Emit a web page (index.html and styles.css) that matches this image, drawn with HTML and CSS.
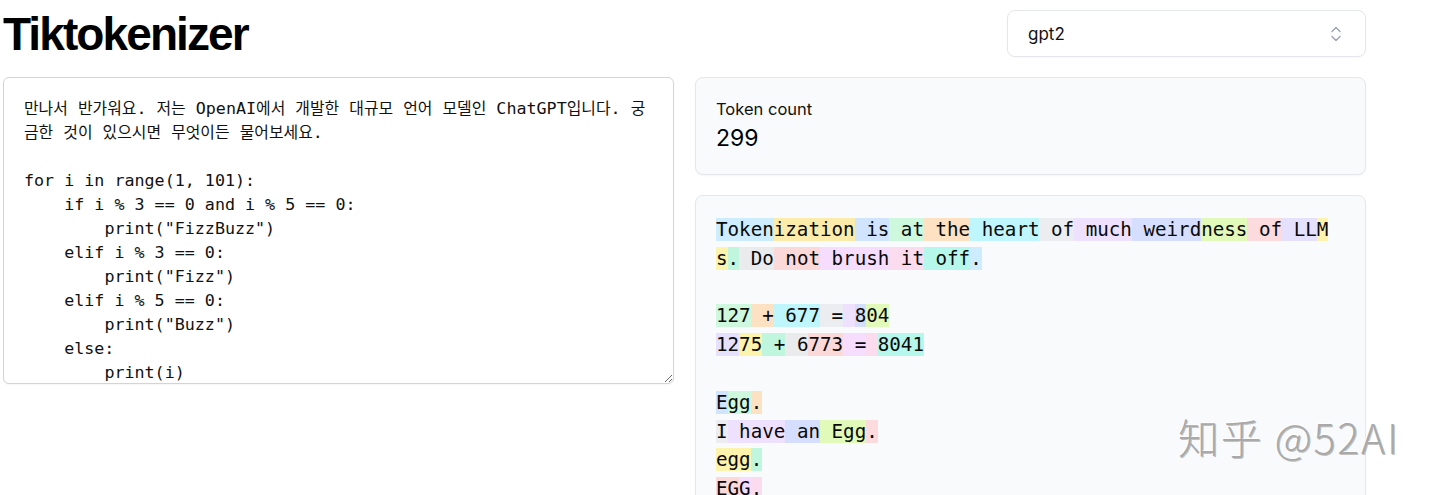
FILE: index.html
```html
<!DOCTYPE html>
<html lang="en">
<head>
<meta charset="utf-8">
<title>Tiktokenizer</title>
<link rel="stylesheet" href="styles.css">
</head>
<body>
<main class="page">
  <header class="top">
    <h1 class="title">Tiktokenizer</h1>
    <div class="select">
      <span class="select-value">gpt2</span>
      <svg class="chev" width="14" height="18" viewBox="0 0 14 18" fill="none" stroke="#9ca3af" stroke-width="1.4" stroke-linecap="round" stroke-linejoin="round"><polyline points="3,6.5 7,2.5 11,6.5"/><polyline points="3,11.5 7,15.5 11,11.5"/></svg>
    </div>
  </header>
  <section class="grid">
    <div class="editor"><div class="editor-text"><span class="ko">만나서</span> <span class="ko">반가워요</span>. <span class="ko">저는</span> OpenAI<span class="ko">에서</span> <span class="ko">개발한</span> <span class="ko">대규모</span> <span class="ko">언어</span> <span class="ko">모델인</span> ChatGPT<span class="ko">입니다</span>. <span class="ko">궁</span>
<span class="ko">금한</span> <span class="ko">것이</span> <span class="ko">있으시면</span> <span class="ko">무엇이든</span> <span class="ko">물어보세요</span>.

for i in range(1, 101):
    if i % 3 == 0 and i % 5 == 0:
        print("FizzBuzz")
    elif i % 3 == 0:
        print("Fizz")
    elif i % 5 == 0:
        print("Buzz")
    else:
        print(i)

Tokenization is at the heart of much weirdness of LLMs. Do not brush it off.</div></div>
    <div class="side">
      <div class="card count">
        <div class="count-label">Token count</div>
        <div class="count-num">299</div>
      </div>
      <div class="card tokens"><div class="token-text"><span class="t sky">Token</span><span class="t amber">ization</span><span class="t blue"> is</span><span class="t green"> at</span><span class="t orange"> the</span><span class="t cyan"> heart</span><span class="t gray"> of</span><span class="t purple"> much</span><span class="t indigo"> weird</span><span class="t lime">ness</span><span class="t rose"> of</span><span class="t violet"> LL</span><span class="t yellow">Ms</span><span class="t emerald">.</span><span class="t zinc"> Do</span><span class="t red"> not</span><span class="t fuchsia"> brush</span><span class="t pink"> it</span><span class="t teal"> off</span><span class="t sky">.</span>

<span class="t green">127</span><span class="t orange"> +</span><span class="t cyan"> 677</span><span class="t gray"> =</span><span class="t purple"> </span><span class="t indigo">8</span><span class="t lime">04</span>
<span class="t violet">12</span><span class="t yellow">75</span><span class="t emerald"> +</span><span class="t zinc"> 6</span><span class="t red">773</span><span class="t fuchsia"> =</span><span class="t pink"> </span><span class="t teal">8041</span>

<span class="t blue">E</span><span class="t green">gg</span><span class="t orange">.</span>
<span class="t gray">I</span><span class="t purple"> have</span><span class="t indigo"> an</span><span class="t lime"> Egg</span><span class="t rose">.</span>
<span class="t yellow">egg</span><span class="t emerald">.</span>
<span class="t red">EG</span><span class="t fuchsia">G</span><span class="t pink">.</span>

<span class="t sky">for</span><span class="t amber"> i</span><span class="t blue"> in</span><span class="t green"> range</span><span class="t orange">(</span><span class="t cyan">1</span><span class="t gray">,</span><span class="t purple"> 101</span><span class="t indigo">):</span></div></div>
    </div>
  </section>
  <div class="watermark">知乎 @52AI</div>
</main>
</body>
</html>
```
FILE: styles.css
```css
* { box-sizing: border-box; }
html, body { margin: 0; padding: 0; background: #ffffff; }
body { overflow: hidden; height: 495px; }

.page {
  position: relative;
  width: 1366px;
  padding-left: 3px;
  font-family: "Inter", "Liberation Sans", sans-serif;
  color: #0a0a0a;
}

.top {
  display: flex;
  justify-content: space-between;
  align-items: flex-start;
  height: 77px;
}

.title {
  margin: 12px 0 0 0;
  font-family: "Liberation Sans", "Inter", sans-serif;
  font-weight: 700;
  font-size: 46px;
  line-height: 45px;
  letter-spacing: -1.9px;
  color: #000;
}

.select {
  margin-top: 10px;
  width: 359px;
  height: 47px;
  border: 1px solid #e5e7eb;
  border-radius: 8px;
  background: #fff;
  display: flex;
  align-items: center;
  justify-content: space-between;
  padding: 0 22px 0 20px;
  box-shadow: 0 1px 2px rgba(0,0,0,0.03);
}
.select-value { font-size: 17px; color: #111; }
.chev { display: block; }

.grid {
  display: grid;
  grid-template-columns: 671px 671px;
  column-gap: 21px;
  align-items: start;
}

.editor {
  height: 307px;
  border: 1px solid #d4d4d8;
  border-radius: 6px;
  background: #fff;
  padding: 18px 20px 0 20px;
  overflow: hidden;
  resize: vertical;
  box-shadow: 0 1px 2px rgba(0,0,0,0.04);
}
.editor-text {
  font-family: "DejaVu Sans Mono", "Liberation Mono", monospace;
  font-size: 16.7px;
  line-height: 24px;
  white-space: pre-wrap;
  color: #111;
}
.ko { font-family: "Noto Sans CJK KR", sans-serif; font-size: 15.9px; }

.side { display: flex; flex-direction: column; gap: 20px; }

.card {
  background: #f9fafb;
  border: 1px solid #e5e7eb;
  border-radius: 8px;
  box-shadow: 0 1px 2px rgba(0,0,0,0.04);
}
.count { height: 98px; padding: 20px 20px 0 20px; }
.count-label { font-size: 16.5px; line-height: 22px; color: #111; }
.count-num { font-size: 23px; line-height: 28px; margin-top: 4px; color: #000; }

.tokens { padding: 20px 28px 40px 20px; min-height: 320px; }
.token-text {
  font-family: "DejaVu Sans Mono", "Liberation Mono", monospace;
  font-size: 19.2px;
  line-height: 28.8px;
  white-space: pre-wrap;
  word-break: break-all;
  color: #0a0a0a;
}

.t.sky { background: rgba(186,230,253,0.7); }
.t.amber { background: rgba(253,230,138,0.7); }
.t.blue { background: rgba(191,219,254,0.7); }
.t.green { background: rgba(187,247,208,0.7); }
.t.orange { background: rgba(254,215,170,0.7); }
.t.cyan { background: rgba(165,243,252,0.7); }
.t.gray { background: rgba(229,231,235,0.7); }
.t.purple { background: rgba(233,213,255,0.7); }
.t.indigo { background: rgba(199,210,254,0.7); }
.t.lime { background: rgba(217,249,157,0.7); }
.t.rose { background: rgba(254,205,211,0.7); }
.t.violet { background: rgba(221,214,254,0.7); }
.t.yellow { background: rgba(254,240,138,0.7); }
.t.emerald { background: rgba(167,243,208,0.7); }
.t.zinc { background: rgba(228,228,231,0.7); }
.t.red { background: rgba(254,202,202,0.7); }
.t.fuchsia { background: rgba(245,208,254,0.7); }
.t.pink { background: rgba(251,207,232,0.7); }
.t.teal { background: rgba(153,246,228,0.7); }

.watermark {
  position: absolute;
  left: 1178px;
  top: 410px;
  font-family: "Noto Sans CJK SC", "Noto Sans", sans-serif;
  font-size: 41px;
  line-height: 52px;
  font-weight: 300;
  letter-spacing: 1.8px;
  color: #a9a9a9;
  text-shadow: -1px -1px 0 rgba(255,255,255,0.9), 1px 1px 0 rgba(120,120,120,0.45);
  white-space: nowrap;
  pointer-events: none;
}
```
